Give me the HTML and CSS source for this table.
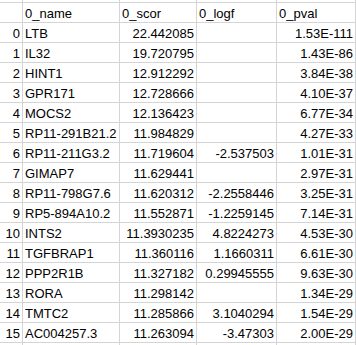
FILE: index.html
```html
<!DOCTYPE html>
<html>
<head>
<meta charset="utf-8">
<link rel="stylesheet" href="styles.css">
</head>
<body>
<div class="sheet">
  <div class="c"></div><div class="c"></div><div class="c"></div><div class="c"></div><div class="c"></div>
  <div class="c h"></div><div class="c h">0_name</div><div class="c h">0_scor</div><div class="c h">0_logf</div><div class="c h">0_pval</div>
  <div class="c n">0</div><div class="c">LTB</div><div class="c n">22.442085</div><div class="c n"></div><div class="c n">1.53E-111</div>
  <div class="c n">1</div><div class="c">IL32</div><div class="c n">19.720795</div><div class="c n"></div><div class="c n">1.43E-86</div>
  <div class="c n">2</div><div class="c">HINT1</div><div class="c n">12.912292</div><div class="c n"></div><div class="c n">3.84E-38</div>
  <div class="c n">3</div><div class="c">GPR171</div><div class="c n">12.728666</div><div class="c n"></div><div class="c n">4.10E-37</div>
  <div class="c n">4</div><div class="c">MOCS2</div><div class="c n">12.136423</div><div class="c n"></div><div class="c n">6.77E-34</div>
  <div class="c n">5</div><div class="c">RP11-291B21.2</div><div class="c n">11.984829</div><div class="c n"></div><div class="c n">4.27E-33</div>
  <div class="c n">6</div><div class="c">RP11-211G3.2</div><div class="c n">11.719604</div><div class="c n">-2.537503</div><div class="c n">1.01E-31</div>
  <div class="c n">7</div><div class="c">GIMAP7</div><div class="c n">11.629441</div><div class="c n"></div><div class="c n">2.97E-31</div>
  <div class="c n">8</div><div class="c">RP11-798G7.6</div><div class="c n">11.620312</div><div class="c n">-2.2558446</div><div class="c n">3.25E-31</div>
  <div class="c n">9</div><div class="c">RP5-894A10.2</div><div class="c n">11.552871</div><div class="c n">-1.2259145</div><div class="c n">7.14E-31</div>
  <div class="c n">10</div><div class="c">INTS2</div><div class="c n">11.3930235</div><div class="c n">4.8224273</div><div class="c n">4.53E-30</div>
  <div class="c n">11</div><div class="c">TGFBRAP1</div><div class="c n">11.360116</div><div class="c n">1.1660311</div><div class="c n">6.61E-30</div>
  <div class="c n">12</div><div class="c">PPP2R1B</div><div class="c n">11.327182</div><div class="c n">0.29945555</div><div class="c n">9.63E-30</div>
  <div class="c n">13</div><div class="c">RORA</div><div class="c n">11.298142</div><div class="c n"></div><div class="c n">1.34E-29</div>
  <div class="c n">14</div><div class="c">TMTC2</div><div class="c n">11.285866</div><div class="c n">3.1040294</div><div class="c n">1.54E-29</div>
  <div class="c n">15</div><div class="c">AC004257.3</div><div class="c n">11.263094</div><div class="c n">-3.47303</div><div class="c n">2.00E-29</div>
  <div class="c"></div><div class="c"></div><div class="c"></div><div class="c"></div><div class="c"></div>
</div>
</body>
</html>
```
FILE: styles.css
```css
html, body {
  margin: 0;
  padding: 0;
  background: #ffffff;
}
.sheet {
  display: grid;
  grid-template-columns: 23px 97px 77px 80px 79px;
  grid-template-rows: 3px repeat(17, 20px) 3px;
  font-family: "Liberation Sans", Arial, sans-serif;
  font-size: 13px;
  color: #000000;
}
.c {
  box-sizing: border-box;
  border-right: 1px solid #d4d4d4;
  border-bottom: 1px solid #d4d4d4;
  padding: 1px 2px 0;
  line-height: 19px;
  white-space: nowrap;
  overflow: hidden;
}
.n {
  text-align: right;
}
.h {
  text-align: left;
}
```
